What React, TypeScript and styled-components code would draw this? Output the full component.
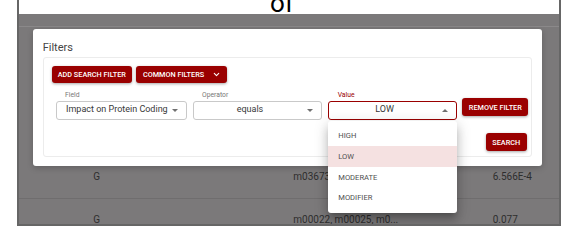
import React from "react";
import styled, { createGlobalStyle } from "styled-components";
import { ChevronDown } from "lucide-react";

const Global = createGlobalStyle`
  html, body { margin: 0; padding: 0; background: #fff; }
  body { font-family: Roboto, "Liberation Sans", Arial, sans-serif; width: 576px; height: 241px; overflow: hidden; }
  * { box-sizing: border-box; }
`;

const RED = "#9a0000";

const Frame = styled.div`
  margin-left: 17px;
  width: 544px;
  height: 226px;
  border: 2px solid #666;
  border-top: none;
  display: flex;
  flex-direction: column;
  background: #fff;
`;

const PageHeader = styled.div`
  height: 14px;
  flex-shrink: 0;
  overflow: hidden;
  padding-left: 251px;
`;

const HeaderText = styled.span`
  display: block;
  font-size: 26px;
  line-height: 26px;
  margin-top: -10px;
  color: #000;
`;

const Backdrop = styled.div`
  flex: 1;
  position: relative;
  background: #7b797a;
  overflow: hidden;
`;

const Table = styled.div`
  display: flex;
  flex-direction: column;
`;

const TableHead = styled.div`
  height: 13px;
  border-bottom: 1px solid #8b898a;
`;

const TableSpacer = styled.div`
  height: 128px;
`;

const Row = styled.div<{ $divider?: boolean; $h: number; $pt?: number }>`
  display: grid;
  grid-template-columns: 200px 199.4px 1fr;
  padding-left: 74.3px;
  padding-top: ${(p) => p.$pt ?? 0}px;
  height: ${(p) => p.$h}px;
  align-items: ${(p) => (p.$pt ? "start" : "center")};
  border-bottom: ${(p) => (p.$divider ? "1px solid #6f6d6e" : "none")};
`;

const Cell = styled.div`
  font-size: 10px;
  line-height: 10px;
  color: #2e2e2e;
  white-space: nowrap;
`;

const Modal = styled.div`
  position: absolute;
  left: 14.3px;
  top: 15.3px;
  width: 508.4px;
  background: #fff;
  border-radius: 3px;
  padding: 12px 10px 9.6px 9.4px;
  box-shadow: 0 2px 6px rgba(0, 0, 0, 0.2);
`;

const Title = styled.div`
  font-size: 11px;
  line-height: 13px;
  color: #444;
  margin-bottom: 2.8px;
`;

const Panel = styled.div`
  border: 1px solid #ececec;
  border-radius: 3px;
  padding: 7.7px 4px 4.7px 8px;
`;

const ButtonRow = styled.div`
  display: flex;
  gap: 3.7px;
`;

const Button = styled.button<{ $h?: number; $pl?: number; $pr?: number }>`
  height: ${(p) => p.$h ?? 17}px;
  padding: 0 ${(p) => p.$pr ?? 6}px 0 ${(p) => p.$pl ?? 6}px;
  background: ${RED};
  color: #fff;
  border: none;
  border-radius: 3px;
  font-family: Roboto, "Liberation Sans", Arial, sans-serif;
  font-weight: 500;
  font-size: 7.3px;
  text-transform: uppercase;
  white-space: nowrap;
  display: inline-flex;
  align-items: center;
  gap: 8px;
  box-shadow: 0 1px 3px rgba(0, 0, 0, 0.35);
  cursor: pointer;
`;

const RemoveButton = styled(Button)`
  margin-bottom: 4.3px;
  flex-shrink: 0;
`;

const FilterRow = styled.div`
  display: flex;
  align-items: flex-end;
  gap: 5.7px;
  margin-top: 8.7px;
  padding-left: 4.3px;
`;

const FieldGroup = styled.div<{ $w: number }>`
  position: relative;
  width: ${(p) => p.$w}px;
  flex-shrink: 0;
`;

const FieldLabel = styled.div<{ $active?: boolean }>`
  font-size: 6.8px;
  line-height: 8px;
  color: ${(p) => (p.$active ? RED : "#777")};
  padding-left: ${(p) => (p.$active ? 10 : 9)}px;
  margin-bottom: 1.6px;
`;

const SelectBox = styled.div<{ $active?: boolean }>`
  height: 19px;
  border: ${(p) => (p.$active ? `1.5px solid ${RED}` : "1px solid #c9c9c9")};
  border-radius: 3px;
  display: flex;
  align-items: center;
  padding: 0 ${(p) => (p.$active ? 7.5 : 8)}px 0 ${(p) => (p.$active ? 8.5 : 9)}px;
  font-size: 9px;
  color: #383838;
  background: #fff;
`;

const SelectText = styled.span<{ $center?: boolean }>`
  flex: 1;
  text-align: ${(p) => (p.$center ? "center" : "left")};
  margin-right: ${(p) => (p.$center ? 10 : 0)}px;
  line-height: 1;
  padding-bottom: 1.5px;
  white-space: nowrap;
`;

const Caret = styled.span<{ $up?: boolean }>`
  width: 0;
  height: 0;
  border-left: 3px solid transparent;
  border-right: 3px solid transparent;
  ${(p) =>
    p.$up ? "border-bottom: 3px solid #707070;" : "border-top: 3px solid #707070;"}
  flex-shrink: 0;
  margin-bottom: 1px;
`;

const SearchRow = styled.div`
  display: flex;
  justify-content: flex-end;
  margin-top: 13.3px;
`;

const Menu = styled.div`
  position: absolute;
  left: 0;
  top: calc(100% + 0.7px);
  width: 100%;
  background: #fff;
  border-radius: 3px;
  padding: 4.6px 0;
  z-index: 10;
  box-shadow: 0 5px 5px -3px rgba(0, 0, 0, 0.2), 0 8px 10px 1px rgba(0, 0, 0, 0.14),
    0 3px 14px 2px rgba(0, 0, 0, 0.12);
`;

const MenuItem = styled.div<{ $selected?: boolean }>`
  height: 20.7px;
  display: flex;
  align-items: center;
  padding-left: 10.6px;
  font-size: 7.6px;
  font-weight: 400;
  color: #4f4f4f;
  background: ${(p) => (p.$selected ? "#f5e1e1" : "transparent")};
`;

const options = ["HIGH", "LOW", "MODERATE", "MODIFIER"];

export default function App() {
  return (
    <>
      <Global />
      <Frame>
        <PageHeader>
          <HeaderText>of</HeaderText>
        </PageHeader>
        <Backdrop>
          <Table>
            <TableHead />
            <TableSpacer />
            <Row $divider $h={44}>
              <Cell>G</Cell>
              <Cell>m03673</Cell>
              <Cell>6.566E-4</Cell>
            </Row>
            <Row $h={24} $pt={16}>
              <Cell>G</Cell>
              <Cell>m00022, m00025, m0...</Cell>
              <Cell>0.077</Cell>
            </Row>
          </Table>
          <Modal>
            <Title>Filters</Title>
            <Panel>
              <ButtonRow>
                <Button>Add Search Filter</Button>
                <Button $pl={7.3} $pr={6}>
                  Common Filters
                  <ChevronDown size={9} strokeWidth={2.8} />
                </Button>
              </ButtonRow>
              <FilterRow>
                <FieldGroup $w={131.3}>
                  <FieldLabel>Field</FieldLabel>
                  <SelectBox>
                    <SelectText>Impact on Protein Coding</SelectText>
                    <Caret />
                  </SelectBox>
                </FieldGroup>
                <FieldGroup $w={129}>
                  <FieldLabel>Operator</FieldLabel>
                  <SelectBox>
                    <SelectText $center>equals</SelectText>
                    <Caret />
                  </SelectBox>
                </FieldGroup>
                <FieldGroup $w={129}>
                  <FieldLabel $active>Value</FieldLabel>
                  <SelectBox $active>
                    <SelectText $center>LOW</SelectText>
                    <Caret $up />
                  </SelectBox>
                  <Menu>
                    {options.map((o) => (
                      <MenuItem key={o} $selected={o === "LOW"}>
                        {o}
                      </MenuItem>
                    ))}
                  </Menu>
                </FieldGroup>
                <RemoveButton $h={17.4} $pl={6.5} $pr={6.5}>
                  Remove Filter
                </RemoveButton>
              </FilterRow>
              <SearchRow>
                <Button $h={17.7} $pl={6.5} $pr={6.5}>
                  Search
                </Button>
              </SearchRow>
            </Panel>
          </Modal>
        </Backdrop>
      </Frame>
    </>
  );
}
